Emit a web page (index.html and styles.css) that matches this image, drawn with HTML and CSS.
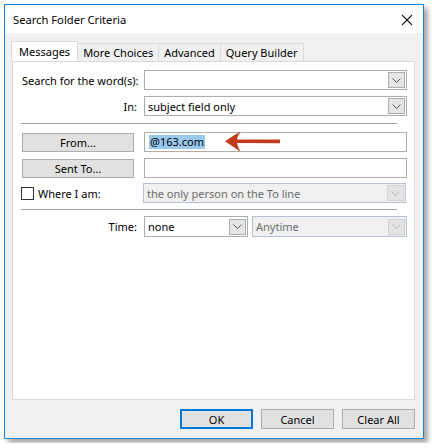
FILE: index.html
```html
<!DOCTYPE html>
<html lang="en">
<head>
    <meta charset="UTF-8">
    <title>Search Folder Criteria</title>
    <link rel="stylesheet" href="styles.css">
</head>
<body>
    <div class="dialog">
        <div class="titlebar">
            <span>Search Folder Criteria</span>
            <svg class="close" width="12" height="12" viewBox="0 0 12 12">
                <path d="M1 1 L11 11 M11 1 L1 11" stroke="#1a1a1a" stroke-width="1.1" fill="none"/>
            </svg>
        </div>
        <div class="content">
            <div class="tabs">
                <div class="tab active">Messages</div>
                <div class="tab">More Choices</div>
                <div class="tab">Advanced</div>
                <div class="tab">Query Builder</div>
            </div>
            <div class="panel">
                <div class="row">
                    <label class="label">Search for the word(s):</label>
                    <div class="combo field">
                        <span class="value"></span>
                        <span class="drop"><svg width="9" height="5" viewBox="0 0 9 5"><polyline points="0.5,0.5 4.5,4.5 8.5,0.5" fill="none" stroke="#555" stroke-width="1"/></svg></span>
                    </div>
                </div>
                <div class="row">
                    <label class="label">In:</label>
                    <div class="combo field">
                        <span class="value">subject field only</span>
                        <span class="drop"><svg width="9" height="5" viewBox="0 0 9 5"><polyline points="0.5,0.5 4.5,4.5 8.5,0.5" fill="none" stroke="#555" stroke-width="1"/></svg></span>
                    </div>
                </div>
                <div class="sep"></div>
                <div class="row">
                    <div class="label-cell"><button class="btn wide">From...</button></div>
                    <div class="textbox field"><span class="selected">@163.com</span></div>
                </div>
                <div class="row">
                    <div class="label-cell"><button class="btn wide">Sent To...</button></div>
                    <div class="textbox field"></div>
                </div>
                <div class="row short">
                    <div class="label-cell check">
                        <span class="box"></span>
                        <span>Where I am:</span>
                    </div>
                    <div class="combo field disabled">
                        <span class="value">the only person on the To line</span>
                        <span class="drop"><svg width="9" height="5" viewBox="0 0 9 5"><polyline points="0.5,0.5 4.5,4.5 8.5,0.5" fill="none" stroke="#b5b5b5" stroke-width="1"/></svg></span>
                    </div>
                </div>
                <div class="sep last"></div>
                <div class="row time">
                    <label class="label">Time:</label>
                    <div class="pair">
                        <div class="combo small">
                            <span class="value">none</span>
                            <span class="drop"><svg width="9" height="5" viewBox="0 0 9 5"><polyline points="0.5,0.5 4.5,4.5 8.5,0.5" fill="none" stroke="#555" stroke-width="1"/></svg></span>
                        </div>
                        <div class="combo disabled grow">
                            <span class="value">Anytime</span>
                            <span class="drop"><svg width="9" height="5" viewBox="0 0 9 5"><polyline points="0.5,0.5 4.5,4.5 8.5,0.5" fill="none" stroke="#b5b5b5" stroke-width="1"/></svg></span>
                        </div>
                    </div>
                </div>

                <!-- red pointer next to the From address -->
                <svg class="pointer" width="58" height="24" viewBox="0 0 58 24">
                    <path d="M1 11.2 Q9 6 16.5 1.6 Q13.5 6 13 9.6 L56 9.4 L56 13.2 L13 13 Q13.5 17 16.5 21.8 Q9 16.5 1 11.2 Z" fill="#c03a1b"/>
                </svg>
            </div>
            <div class="actions">
                <button class="btn default">OK</button>
                <button class="btn">Cancel</button>
                <button class="btn">Clear All</button>
            </div>
        </div>
    </div>
</body>
</html>
```

FILE: styles.css
```css
* {
    margin: 0;
    padding: 0;
    box-sizing: border-box;
}
body {
    background: #fff;
    font-family: "Noto Sans", "Open Sans", sans-serif;
    font-size: 11px;
    color: #000;
    padding: 4px;
}
.dialog {
    width: 420px;
    height: 435px;
    border: 1px solid #1883d7;
    background: #f0f0f0;
    box-shadow: 4px 4px 5px rgba(0, 0, 0, 0.35);
    display: flex;
    flex-direction: column;
}
.titlebar {
    height: 28px;
    background: #fff;
    display: flex;
    align-items: center;
    justify-content: space-between;
    padding: 0 10px 0 8px;
    font-size: 11.2px;
}
.close {
    margin-top: 1px;
}
.content {
    flex: 1;
    padding: 8px 8px 0 7px;
    display: flex;
    flex-direction: column;
}
.tabs {
    display: flex;
    align-items: flex-end;
    height: 20px;
    white-space: nowrap;
}
.tab {
    height: 18px;
    padding: 0 5px;
    border: 1px solid #d9d9d9;
    border-bottom: none;
    border-left: none;
    display: flex;
    align-items: center;
    line-height: 1;
}
.tab.active {
    height: 21px;
    margin-left: -1px;
    margin-bottom: -1px;
    padding: 0 7px 2px 7px;
    background: #fff;
    border-left: 1px solid #d9d9d9;
    position: relative;
}
.panel {
    position: relative;
    height: 339px;
    background: #fff;
    border: 1px solid #d9d9d9;
    padding: 8px 7px 0 9px;
    display: flex;
    flex-direction: column;
}
.row {
    display: flex;
    align-items: center;
    height: 20px;
    gap: 7px;
    white-space: nowrap;
}
.row + .row {
    margin-top: 6px;
}
.row.short {
    margin-top: 5px;
}
.row.time {
    height: 21px;
}
.label, .label-cell {
    width: 115px;
    flex-shrink: 0;
}
.label {
    text-align: right;
}
.label-cell {
    display: flex;
    align-items: center;
}
.field {
    width: 263px;
    height: 100%;
}
.sep {
    height: 1px;
    background: #a0a0a0;
    margin: 7px 10px 8px -1px;
}
.sep.last {
    margin: 6px 10px 6px -1px;
}
.combo, .textbox {
    border: 1px solid #adadad;
    background: #fff;
    display: flex;
    align-items: center;
    padding-left: 3px;
}
.value {
    flex: 1;
    white-space: nowrap;
    overflow: hidden;
}
.drop {
    width: 17px;
    height: 16px;
    margin-right: 1px;
    border: 1px solid #adadad;
    background: #e5e5e5;
    display: flex;
    align-items: center;
    justify-content: center;
}
.combo.disabled {
    background: #f0f0f0;
    border-color: #b6c2d1;
    color: #6d6d6d;
}
.combo.disabled .drop {
    background: #e3e3e3;
    border-color: #d2d2d2;
}
.pair {
    display: flex;
    gap: 4px;
    width: 263px;
    height: 100%;
}
.combo.small {
    width: 104px;
}
.combo.grow {
    flex: 1;
}
.selected {
    background: #99c9ef;
    line-height: 14px;
    padding: 0 1px;
    margin-left: 1px;
}
.btn {
    font-family: inherit;
    font-size: 11px;
    color: #000;
    background: #e1e1e1;
    border: 1px solid #adadad;
    height: 20px;
    width: 73px;
}
.btn.wide {
    width: 112px;
    height: 19px;
}
.btn.default {
    border: 2px solid #0078d7;
}
.check {
    gap: 4px;
    margin-left: -1px;
}
.box {
    width: 13px;
    height: 13px;
    border: 1px solid #333;
    background: #fff;
}
.actions {
    display: flex;
    justify-content: flex-end;
    gap: 8px;
    margin-top: 9px;
}
.pointer {
    position: absolute;
    left: 211px;
    top: 68px;
}
```
